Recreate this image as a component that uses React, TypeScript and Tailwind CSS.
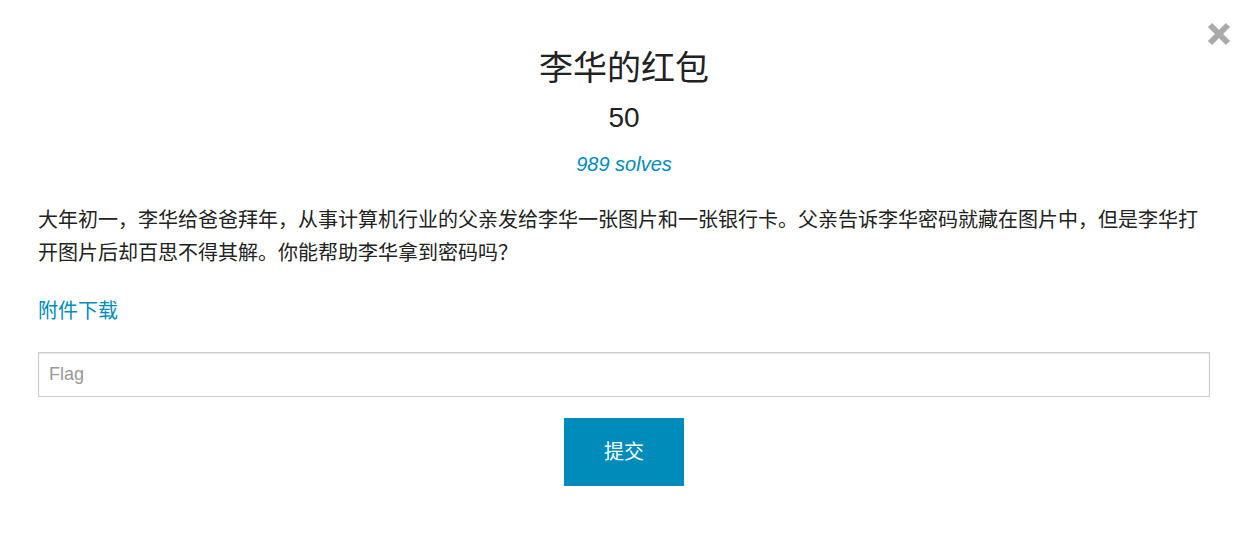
import React from "react";

const font = '"Liberation Sans", "Noto Sans CJK SC", sans-serif';

function CloseIcon() {
    return (
        <svg width="26" height="26" viewBox="0 0 26 26" className="block">
            <path d="M4 4 L22 22 M22 4 L4 22" stroke="#aaaaaa" strokeWidth="6" strokeLinecap="butt" />
        </svg>
    );
}

export default function App() {
    return (
        <div className="relative w-full h-[548px] bg-white text-[#222222] px-[38px] pt-[48px]" style={{ fontFamily: font }}>
            <button className="absolute top-[21px] right-[16px] cursor-pointer">
                <CloseIcon />
            </button>

            <h1 className="text-center text-[34px] leading-[40px] font-normal">李华的红包</h1>
            <div className="text-center text-[28px] leading-[36px] mt-[12px]">50</div>
            <div className="text-center text-[20px] leading-[24px] mt-[16px] italic text-[#008cba]">989 solves</div>

            <p className="mt-[28px] text-[20px] leading-[33px]">
                大年初一，李华给爸爸拜年，从事计算机行业的父亲发给李华一张图片和一张银行卡。父亲告诉李华密码就藏在图片中，但是李华打开图片后却百思不得其解。你能帮助李华拿到密码吗？
            </p>

            <a href="#" className="block w-fit mt-[26px] text-[20px] leading-[30px] text-[#008cba]">附件下载</a>

            <input
                type="text"
                placeholder="Flag"
                className="block mt-[26px] w-full h-[45px] border border-[#cccccc] px-[10px] text-[18px] placeholder:text-[#999999] shadow-[inset_0_1px_2px_rgba(0,0,0,0.1)] outline-none"
            />

            <div className="flex justify-center mt-[21px]">
                <button className="w-[120px] h-[68px] bg-[#008cba] text-white text-[20px]">提交</button>
            </div>
        </div>
    );
}
